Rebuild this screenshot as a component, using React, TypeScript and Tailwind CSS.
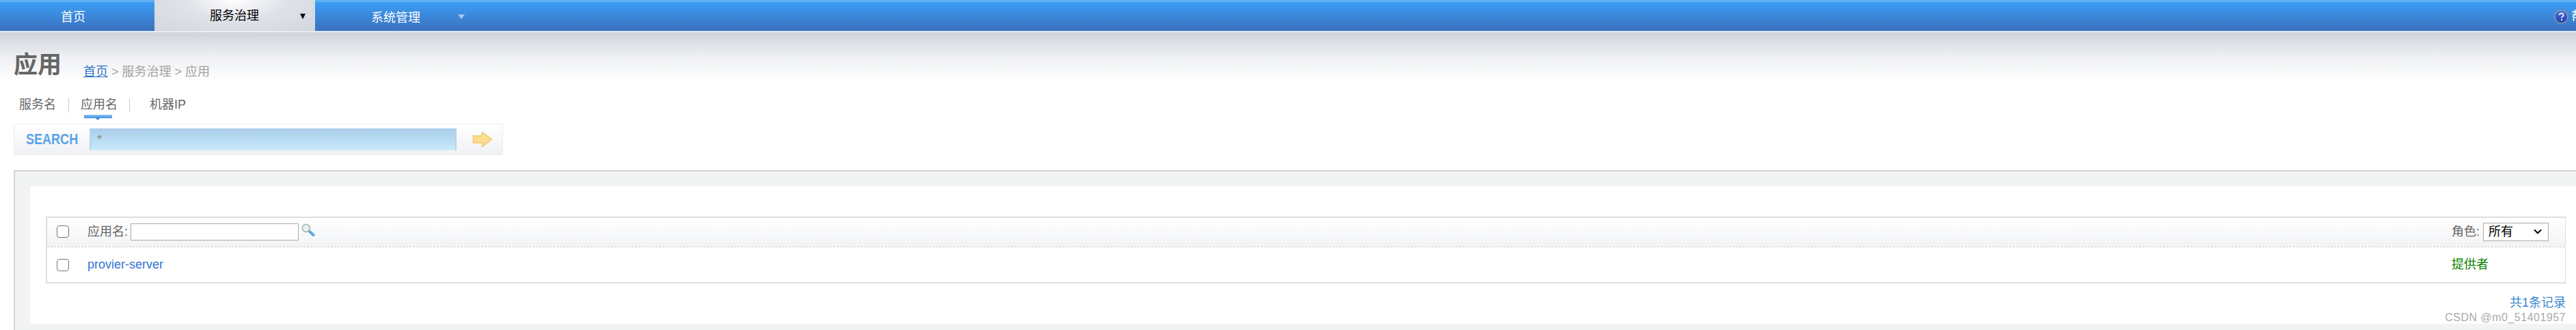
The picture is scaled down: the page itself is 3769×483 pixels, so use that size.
import { ChevronDown } from 'lucide-react';

const FONT = 'font-["Liberation_Sans","Noto_Sans_CJK_SC",sans-serif]';

function HelpIcon() {
  return (
    <svg width="21" height="21" viewBox="0 0 21 21" className="shrink-0">
      <defs>
        <linearGradient id="helpFill" x1="0" y1="0" x2="0" y2="1">
          <stop offset="0" stopColor="#4a6fd8" />
          <stop offset="1" stopColor="#1f3fae" />
        </linearGradient>
      </defs>
      <circle cx="10.5" cy="10.5" r="9.5" fill="url(#helpFill)" stroke="#8d97a8" strokeWidth="1.6" />
      <path d="M7.6 8.2c0-1.8 1.3-2.7 3-2.7s3 1 3 2.5c0 2.2-2.6 2.2-2.6 4.2" fill="none" stroke="#e8ecfa" strokeWidth="1.8" />
      <circle cx="11" cy="15" r="1.2" fill="#e8ecfa" />
    </svg>
  );
}

function GoArrow() {
  return (
    <svg width="30" height="24" viewBox="0 0 30 24">
      <defs>
        <linearGradient id="arrowFill" x1="0" y1="0" x2="0" y2="1">
          <stop offset="0" stopColor="#ffe680" />
          <stop offset="1" stopColor="#ffd49a" />
        </linearGradient>
      </defs>
      <path d="M1.5 7h13V1.5L28.5 12 14.5 22.5V17h-13z" fill="url(#arrowFill)" stroke="#efd07a" strokeWidth="2" strokeLinejoin="round" />
    </svg>
  );
}

function Magnifier() {
  return (
    <svg width="20" height="19" viewBox="0 0 20 19">
      <path d="M10.5 10.5l7 6.5" stroke="#5aa9e0" strokeWidth="4" strokeLinecap="round" />
      <circle cx="6.8" cy="6.8" r="5.6" fill="#e4efeb" stroke="#a3b5b1" strokeWidth="1.6" />
    </svg>
  );
}

function Checkbox() {
  return <span className="block w-[18px] h-[18px] rounded-[4px] border border-[#767676] bg-white shrink-0" />;
}

export default function App() {
  return (
    <div className={`relative w-[3769px] h-[483px] overflow-hidden bg-white text-[18px] flex flex-col ${FONT}`}>
      {/* top nav */}
      <div className="h-[47px] shrink-0 border-b border-white">
        <div className="h-[46px] flex bg-gradient-to-b from-[#3a9ef6] to-[#3a71bc] border-t-[3px] border-b-[1px] border-t-[#64b0f5] border-b-[#9cc4ee] text-white">
          <div className="w-[226px] flex items-center justify-center pt-[3px] pr-[12px]">首页</div>
          <div className="w-[235px] -mt-[3px] -mb-[1px] h-[46px] flex items-center relative text-black bg-[radial-gradient(ellipse_at_50%_0%,#ffffff_0%,#dfe2e8_45%,#d2d6df_100%)]">
            <span className="ml-[81px]">服务治理</span>
            <span className="absolute left-[213px] top-[20px] w-0 h-0 border-x-[4px] border-x-transparent border-t-[8px] border-t-black" />
          </div>
          <div className="flex items-center pl-[82px] pt-[4px]">系统管理</div>
          <span className="ml-[55px] mt-[18px] w-0 h-0 border-x-[5px] border-x-transparent border-t-[7px] border-t-[#9ec8f2]" />
          <div className="ml-auto flex items-center gap-[4px] w-[32px] pt-[1px]">
            <HelpIcon />
            <span className="whitespace-nowrap">帮助</span>
          </div>
        </div>
      </div>

      {/* page title */}
      <div className="h-[73px] shrink-0 flex items-end pl-[20px] bg-gradient-to-b from-[#d0d3dc] via-[#eef0f3] to-white">
        <h1 className="text-[35px] leading-[50px] font-bold text-[#666]">应用</h1>
        <div className="ml-[32px] mb-[3px] leading-[24px] text-[#a3a3a3]">
          <a className="text-[#2f74c8] underline">首页</a> &gt; 服务治理 &gt; 应用
        </div>
      </div>

      {/* tabs */}
      <div className="h-[61px] shrink-0 pl-[28px] pt-[21px] flex items-start text-[#666]">
        <span className="leading-[24px]">服务名</span>
        <span className="ml-[18px] mr-[17px] mt-[3px] w-px h-[21px] bg-[#ccc]" />
        <span className="relative leading-[24px]">
          应用名
          <span className="absolute left-[5px] top-[27px] w-[41px] h-[5px] bg-gradient-to-b from-[#8cc0f4] to-[#3d8fe0]" />
          <span className="absolute left-[22px] top-[32px] w-0 h-0 border-x-[3px] border-x-transparent border-t-[3px] border-t-[#4a7fc0]" />
        </span>
        <span className="ml-[17px] mt-[3px] w-px h-[21px] bg-[#ccc]" />
        <span className="ml-[29px] leading-[24px]">机器IP</span>
      </div>

      {/* search */}
      <div className="ml-[20px] w-[716px] h-[46px] shrink-0 flex items-center border border-[#ececec] bg-gradient-to-b from-white to-[#f0f1f3]">
        <span className="ml-[17px] w-[93px] text-[22px] leading-none font-bold text-[#5ba4ea] scale-x-[0.82] origin-left">SEARCH</span>
        <div className="w-[537px] h-[32px] pl-[9px] pt-[4px] leading-[24px] text-[#888] bg-gradient-to-b from-[#a9cdea] to-[#c9eafb] border-x-2 border-[#b5d4e6]">*</div>
        <span className="ml-[23px] flex"><GoArrow /></span>
      </div>

      {/* content panel */}
      <div className="mt-[22px] ml-[20px] flex-1 min-h-0 bg-[#f2f4f4] border-t-2 border-l-2 border-[#d4d4d4] pt-[22px] pl-[22px]">
        <div className="h-[201px] bg-white pt-[44px] pl-[23px] pr-[15px]">
          <div className="h-[98px] border-2 border-[#dedede] border-r-[1px] flex flex-col">
            <div className="h-[43px] shrink-0 flex items-center pl-[14px] pr-[24px] pb-[2px] bg-gradient-to-b from-white to-[#f1f3f5] border-b border-dashed border-[#ccc] text-[#666]">
              <Checkbox />
              <span className="ml-[27px]">应用名:</span>
              <input readOnly className="ml-[4px] w-[246px] h-[25px] bg-white border border-[#ababab] outline-none" />
              <span className="ml-[4px] -mt-[6px] flex"><Magnifier /></span>
              <span className="ml-auto">角色:</span>
              <div className="ml-[5px] w-[96px] h-[27px] flex items-center justify-between pl-[7px] pr-[6px] text-black bg-white border border-[#ababab]">
                所有
                <ChevronDown size={18} strokeWidth={2.5} />
              </div>
            </div>
            <div className="flex-1 flex items-center pl-[14px] pr-[24px]">
              <Checkbox />
              <a className="ml-[27px] text-[#2f74d0]">provier-server</a>
              <span className="ml-auto w-[142px] text-[#0a8000]">提供者</span>
            </div>
          </div>
          <div className="mt-[18px] text-right leading-[20px] text-[#3a86d0]">共1条记录</div>
        </div>
      </div>

      {/* watermark */}
      <span className="absolute right-[15px] top-[455px] text-[16px] leading-[20px] text-[#aaa] tracking-[0.5px]">CSDN @m0_51401957</span>
    </div>
  );
}
